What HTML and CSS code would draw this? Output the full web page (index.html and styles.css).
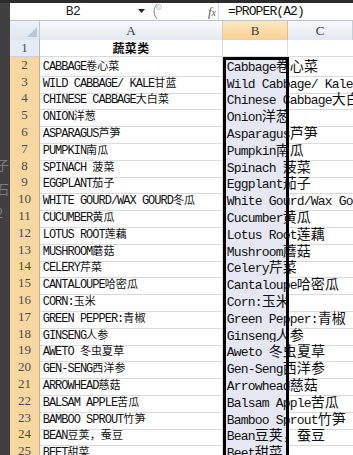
FILE: index.html
```html
<!DOCTYPE html>
<html>
<head>
<meta charset="utf-8">
<link rel="stylesheet" href="styles.css">
</head>
<body>
<div class="screen">
  <div class="topband"></div>
  <div class="main">
    <div class="strip">
      <span class="ghost g1">子</span>
      <span class="ghost g2">石</span>
      <span class="ghost g3">2</span>
    </div>
    <div class="excel">
      <div class="fbar">
        <div class="namebox">B2</div>
        <div class="nbarrow"><svg width="8" height="5" viewBox="0 0 8 5"><path d="M0 0 H7 L3.5 4 Z" fill="#222"/></svg></div>
        <div class="handle"><svg width="22" height="17" viewBox="0 0 22 17"><path d="M9 1 Q3 8.5 9 16" fill="none" stroke="#9aa3ad" stroke-width="1.2"/><circle cx="11" cy="4" r="2.6" fill="#e8ecf1" stroke="#c5ccd5" stroke-width="0.8"/></svg></div>
        <div class="fx"><span>f</span><span class="fxx">x</span></div>
        <div class="formula">=PROPER(A2)</div>
      </div>
      <div class="sheet">
        <div class="colhead">
          <div class="corner"><svg width="30" height="19" viewBox="0 0 30 19"><path d="M27 6 L27 16 L17 16 Z" fill="#b9c7d7"/></svg></div>
          <div class="ch">A</div>
          <div class="ch sel">B</div>
          <div class="ch">C</div>
        </div>
        <div class="row"><div class="rh">1</div><div class="ca title">蔬菜类</div><div class="cb plain"></div><div class="cc"></div></div>
        <div class="row"><div class="rh sel">2</div><div class="ca">CABBAGE<span class="zh">卷心菜</span></div><div class="cb"><span class="bt">Cabbage<span class="zh">卷心菜</span></span></div><div class="cc"></div></div>
        <div class="row"><div class="rh sel">3</div><div class="ca">WILD CABBAGE/ KALE<span class="zh">甘蓝</span></div><div class="cb"><span class="bt">Wild Cabbage/ Kale<span class="zh">甘蓝</span></span></div><div class="cc"></div></div>
        <div class="row"><div class="rh sel">4</div><div class="ca">CHINESE CABBAGE<span class="zh">大白菜</span></div><div class="cb"><span class="bt">Chinese Cabbage<span class="zh">大白菜</span></span></div><div class="cc"></div></div>
        <div class="row"><div class="rh sel">5</div><div class="ca">ONION<span class="zh">洋葱</span></div><div class="cb"><span class="bt">Onion<span class="zh">洋葱</span></span></div><div class="cc"></div></div>
        <div class="row"><div class="rh sel">6</div><div class="ca">ASPARAGUS<span class="zh">芦笋</span></div><div class="cb"><span class="bt">Asparagus<span class="zh">芦笋</span></span></div><div class="cc"></div></div>
        <div class="row"><div class="rh sel">7</div><div class="ca">PUMPKIN<span class="zh">南瓜</span></div><div class="cb"><span class="bt">Pumpkin<span class="zh">南瓜</span></span></div><div class="cc"></div></div>
        <div class="row"><div class="rh sel">8</div><div class="ca">SPINACH <span class="zh">菠菜</span></div><div class="cb"><span class="bt">Spinach <span class="zh">菠菜</span></span></div><div class="cc"></div></div>
        <div class="row"><div class="rh sel">9</div><div class="ca">EGGPLANT<span class="zh">茄子</span></div><div class="cb"><span class="bt">Eggplant<span class="zh">茄子</span></span></div><div class="cc"></div></div>
        <div class="row"><div class="rh sel">10</div><div class="ca">WHITE GOURD/WAX GOURD<span class="zh">冬瓜</span></div><div class="cb"><span class="bt">White Gourd/Wax Gourd<span class="zh">冬瓜</span></span></div><div class="cc"></div></div>
        <div class="row"><div class="rh sel">11</div><div class="ca">CUCUMBER<span class="zh">黄瓜</span></div><div class="cb"><span class="bt">Cucumber<span class="zh">黄瓜</span></span></div><div class="cc"></div></div>
        <div class="row"><div class="rh sel">12</div><div class="ca">LOTUS ROOT<span class="zh">莲藕</span></div><div class="cb"><span class="bt">Lotus Root<span class="zh">莲藕</span></span></div><div class="cc"></div></div>
        <div class="row"><div class="rh sel">13</div><div class="ca">MUSHROOM<span class="zh">蘑菇</span></div><div class="cb"><span class="bt">Mushroom<span class="zh">蘑菇</span></span></div><div class="cc"></div></div>
        <div class="row"><div class="rh sel">14</div><div class="ca">CELERY<span class="zh">芹菜</span></div><div class="cb"><span class="bt">Celery<span class="zh">芹菜</span></span></div><div class="cc"></div></div>
        <div class="row"><div class="rh sel">15</div><div class="ca">CANTALOUPE<span class="zh">哈密瓜</span></div><div class="cb"><span class="bt">Cantaloupe<span class="zh">哈密瓜</span></span></div><div class="cc"></div></div>
        <div class="row"><div class="rh sel">16</div><div class="ca">CORN:<span class="zh">玉米</span></div><div class="cb"><span class="bt">Corn:<span class="zh">玉米</span></span></div><div class="cc"></div></div>
        <div class="row"><div class="rh sel">17</div><div class="ca">GREEN PEPPER:<span class="zh">青椒</span></div><div class="cb"><span class="bt">Green Pepper:<span class="zh">青椒</span></span></div><div class="cc"></div></div>
        <div class="row"><div class="rh sel">18</div><div class="ca">GINSENG<span class="zh">人参</span></div><div class="cb"><span class="bt">Ginseng<span class="zh">人参</span></span></div><div class="cc"></div></div>
        <div class="row"><div class="rh sel">19</div><div class="ca">AWETO <span class="zh">冬虫夏草</span></div><div class="cb"><span class="bt">Aweto <span class="zh">冬虫夏草</span></span></div><div class="cc"></div></div>
        <div class="row"><div class="rh sel">20</div><div class="ca">GEN-SENG<span class="zh">西洋参</span></div><div class="cb"><span class="bt">Gen-Seng<span class="zh">西洋参</span></span></div><div class="cc"></div></div>
        <div class="row"><div class="rh sel">21</div><div class="ca">ARROWHEAD<span class="zh">慈菇</span></div><div class="cb"><span class="bt">Arrowhead<span class="zh">慈菇</span></span></div><div class="cc"></div></div>
        <div class="row"><div class="rh sel">22</div><div class="ca">BALSAM APPLE<span class="zh">苦瓜</span></div><div class="cb"><span class="bt">Balsam Apple<span class="zh">苦瓜</span></span></div><div class="cc"></div></div>
        <div class="row"><div class="rh sel">23</div><div class="ca">BAMBOO SPROUT<span class="zh">竹笋</span></div><div class="cb"><span class="bt">Bamboo Sprout<span class="zh">竹笋</span></span></div><div class="cc"></div></div>
        <div class="row"><div class="rh sel">24</div><div class="ca">BEAN<span class="zh">豆荚，蚕豆</span></div><div class="cb"><span class="bt">Bean<span class="zh">豆荚，蚕豆</span></span></div><div class="cc"></div></div>
        <div class="row"><div class="rh sel">25</div><div class="ca">BEET<span class="zh">甜菜</span></div><div class="cb"><span class="bt">Beet<span class="zh">甜菜</span></span></div><div class="cc"></div></div>
        <div class="selection"></div>
      </div>
    </div>
  </div>
</div>
</body>
</html>
```
FILE: styles.css
```css
html, body {
  margin: 0;
  padding: 0;
  background: #3c3c3c;
}
.screen {
  width: 353px;
  height: 455px;
  overflow: hidden;
  display: flex;
  flex-direction: column;
  background: #3c3c3c;
}
.topband {
  height: 3px;
  flex: none;
  background: #2c2c2c;
}
.main {
  flex: 1;
  display: flex;
  min-height: 0;
}
.strip {
  width: 10px;
  flex: none;
  background: #404040;
  display: flex;
  flex-direction: column;
  align-items: flex-start;
  padding-top: 150px;
  box-sizing: border-box;
  overflow: hidden;
}
.ghost {
  font-family: "Noto Sans CJK SC", sans-serif;
  font-size: 13px;
  line-height: 24px;
  color: #7c7c7c;
  margin-left: -4px;
}
.excel {
  flex: 1;
  min-width: 0;
  display: flex;
  flex-direction: column;
  background: #fff;
}
.fbar {
  height: 18px;
  flex: none;
  display: flex;
  align-items: center;
  background: #fff;
  border-bottom: 1px solid #b8c4d2;
  box-sizing: border-box;
}
.namebox {
  width: 126px;
  text-align: center;
  font-family: "Liberation Mono", monospace;
  font-size: 13px;
  letter-spacing: -0.5px;
  color: #222;
  line-height: 17px;
}
.nbarrow {
  width: 12px;
  display: flex;
  justify-content: center;
  align-items: center;
}
.handle {
  width: 22px;
  height: 17px;
}
.handle svg { display: block; }
.fx {
  width: 48px;
  box-sizing: border-box;
  text-align: right;
  padding-right: 2px;
  font-family: "Liberation Serif", serif;
  font-style: italic;
  font-size: 13px;
  color: #5a5a5a;
  line-height: 17px;
}
.fxx { font-size: 10px; }
.formula {
  flex: 1;
  height: 17px;
  border-left: 1px solid #d5dbe3;
  padding-left: 9px;
  font-family: "Liberation Mono", monospace;
  font-size: 13px;
  letter-spacing: -0.9px;
  line-height: 17px;
  color: #111;
  white-space: nowrap;
}
.sheet {
  position: relative;
  flex: 1;
  min-height: 0;
  overflow: hidden;
  background: #fff;
}
.colhead {
  display: grid;
  grid-template-columns: 30px 183px 65px 1fr;
  height: 19px;
  box-sizing: border-box;
  border-bottom: 1px solid #9fb3c9;
}
.corner {
  background: linear-gradient(#eef2f7, #dfe6ee);
  border-right: 1px solid #b9c7d6;
}
.corner svg { display: block; }
.ch {
  display: flex;
  align-items: center;
  justify-content: center;
  font-family: "Liberation Serif", serif;
  font-size: 13px;
  color: #3a3a3a;
  background: linear-gradient(#f7f9fc, #e3e9f1);
  border-right: 1px solid #c3cfdc;
}
.ch.sel {
  background: linear-gradient(#fde8c4, #f8d090);
  border-right-color: #e7bd7d;
}
.row {
  display: grid;
  grid-template-columns: 30px 183px 65px 1fr;
  height: 16.8px;
}
.row > div {
  box-sizing: border-box;
  border-bottom: 1px solid #d9dbdf;
  white-space: nowrap;
  line-height: 16px;
}
.rh {
  text-align: center;
  font-family: "Liberation Serif", serif;
  font-size: 13px;
  color: #4c4c4c;
  background: #e6ecf4;
  border-right: 1px solid #a9bcd1;
  border-bottom-color: #c4d1df !important;
}
.rh.sel {
  background: #f8d7a1;
  border-bottom-color: #edc183 !important;
  border-right-color: #c9ab84;
}
.ca {
  padding-left: 2.7px;
  font-family: "Liberation Mono", monospace;
  font-size: 12px;
  letter-spacing: -1px;
  color: #111;
  border-right: 1px solid #d9dbdf;
  overflow: hidden;
}
.ca .zh {
  font-family: "Noto Sans CJK SC", sans-serif;
  font-size: 11px;
  letter-spacing: 0.1px;
}
.ca.title {
  text-align: center;
  padding-left: 0;
  font-family: "Noto Sans CJK SC", sans-serif;
  font-weight: bold;
  font-size: 12px;
  letter-spacing: 0.3px;
}
.cb {
  background: #e5e8f2;
  padding-left: 3.7px;
  overflow: visible;
  position: relative;
  z-index: 1;
  border-bottom-color: #dcdfe9 !important;
}
.cb.plain {
  background: #fff;
  border-right: 1px solid #d9dbdf;
  border-bottom-color: #d9dbdf !important;
}
.bt {
  font-family: "Liberation Mono", monospace;
  font-size: 13px;
  letter-spacing: -0.8px;
  color: #111;
}
.bt .zh {
  font-family: "Noto Sans CJK SC", sans-serif;
  font-size: 14px;
  letter-spacing: 0.1px;
}
.cc {
  background: transparent;
}
.selection {
  position: absolute;
  left: 213px;
  top: 35.8px;
  width: 66px;
  height: 420px;
  box-sizing: border-box;
  border: 3px solid #000;
  border-bottom: none;
  z-index: 2;
  pointer-events: none;
}
```
